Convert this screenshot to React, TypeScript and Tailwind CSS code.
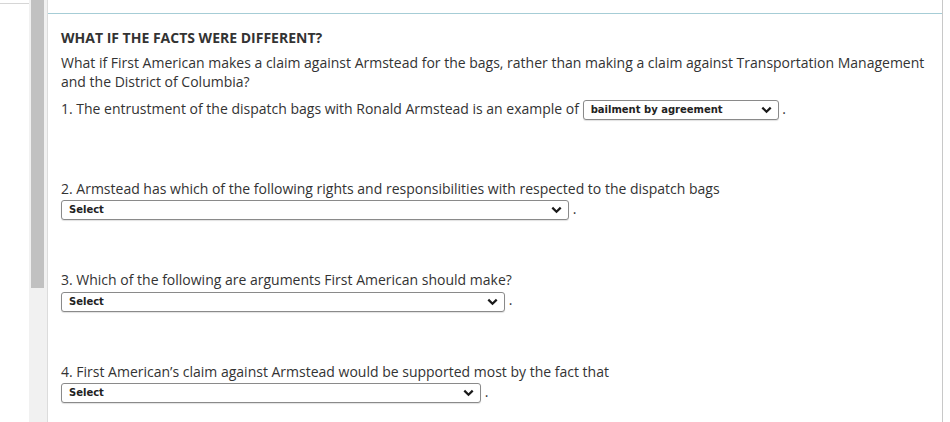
import React from "react";

const Chevron = () => (
  <svg width="11" height="8" viewBox="0 0 11 8" className="absolute right-[6px] top-1/2 -translate-y-1/2 pointer-events-none">
    <path d="M1.3 1.6 L5.5 5.8 L9.7 1.6" fill="none" stroke="#1a1a1a" strokeWidth="2.2" />
  </svg>
);

function Sel({ w, value }: { w: string; value: string }) {
  return (
    <span className={`relative inline-flex items-center h-[20px] ${w} border border-[#8a8a8a] rounded-[3px] bg-white align-middle shadow-[0_1px_1px_rgba(0,0,0,0.12)]`}>
      <span className="pl-[7px] text-[10px] font-bold text-[#222] leading-none" style={{ fontFamily: '"DejaVu Sans", Verdana, sans-serif' }}>
        {value}
      </span>
      <Chevron />
    </span>
  );
}

export default function App() {
  return (
    <div className="w-[950px] h-[422px] bg-white flex overflow-hidden" style={{ fontFamily: '"Open Sans", sans-serif' }}>
      <div className="w-[29px] shrink-0 flex flex-col">
        <div className="h-[3px]" />
        <div className="h-[1px] bg-[#d6d6d6]" />
      </div>
      <div className="w-[18px] shrink-0 bg-[#f1f1f1] flex flex-col">
        <div className="ml-[2px] w-[13px] h-[288px] bg-[#c1c1c1]" />
      </div>
      <div className="w-[1px] shrink-0 bg-[#dcdcdc]" />
      <div className="w-[895px] shrink-0 border-r border-[#c8c8c8] flex flex-col">
        <div className="h-[14px] border-b border-[#a6cdd6]" />
        <div className="pl-[13px] pr-[16px] pt-[14px] text-[14px] text-[#333]">
          <h2 className="font-bold text-[14px] leading-[19px]">WHAT IF THE FACTS WERE DIFFERENT?</h2>
          <p className="mt-[6px] leading-[19px]">
            What if First American makes a claim against Armstead for the bags, rather than making a claim against Transportation Management and the District of Columbia?
          </p>
          <p className="mt-[6px] leading-[24px]">
            1. The entrustment of the dispatch bags with Ronald Armstead is an example of{" "}
            <Sel w="w-[196px]" value="bailment by agreement" /> .
          </p>
          <div className="mt-[58px] leading-[19px]">
            <p>2. Armstead has which of the following rights and responsibilities with respected to the dispatch bags</p>
            <p className="leading-[22px]">
              <Sel w="w-[508px]" value="Select" /> .
            </p>
          </div>
          <div className="mt-[50px] leading-[19px]">
            <p>3. Which of the following are arguments First American should make?</p>
            <p className="leading-[22px]">
              <Sel w="w-[444px]" value="Select" /> .
            </p>
          </div>
          <div className="mt-[50px] leading-[19px]">
            <p>4. First American’s claim against Armstead would be supported most by the fact that</p>
            <p className="leading-[22px]">
              <Sel w="w-[420px]" value="Select" /> .
            </p>
          </div>
        </div>
      </div>
    </div>
  );
}
